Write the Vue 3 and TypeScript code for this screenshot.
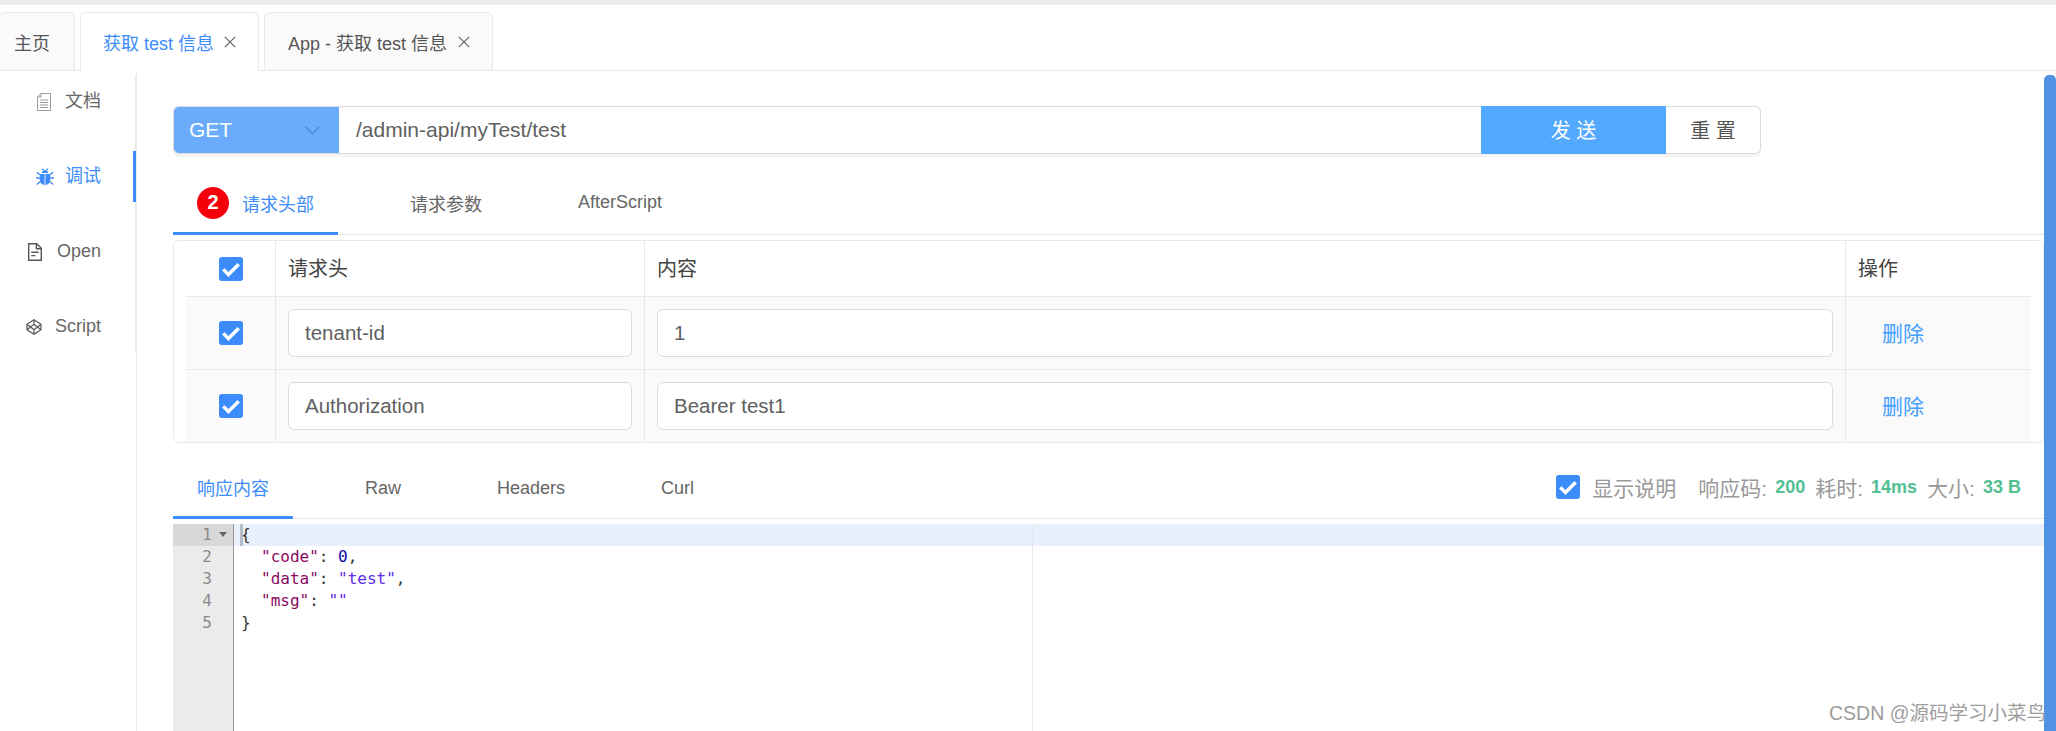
<script setup lang="ts">
const requestTabs = ['请求参数', 'AfterScript']
const responseTabs = ['Raw', 'Headers', 'Curl']
const rows = [
  { id: 1, name: 'tenant-id', value: '1' },
  { id: 2, name: 'Authorization', value: 'Bearer test1' },
]
</script>

<template>
  <div class="page">
    <div class="strip"></div>
    <div class="top-tabs">
      <div class="top-tab first">主页</div>
      <div class="top-tab active">
        <span>获取 test 信息</span>
        <svg class="close" viewBox="0 0 12 12"><path d="M.8.8l10.400 10.400M11.200.8L.8 11.200" /></svg>
      </div>
      <div class="top-tab third">
        <span>App - 获取 test 信息</span>
        <svg class="close" viewBox="0 0 12 12"><path d="M.8.8l10.400 10.400M11.200.8L.8 11.200" /></svg>
      </div>
    </div>

    <div class="body">
      <aside class="aside">
        <nav class="menu">
          <div class="item">
            <svg class="ic doc" viewBox="0 0 14 18" fill="none" stroke="#999" stroke-width="1">
              <path d="M4 .5h9.500v17H.5V4z" /><path d="M4 .5V4H.5M3 7h8M3 9.500h8M3 12h8M3 14.500h8" />
            </svg>
            <span class="cjk">文档</span>
          </div>
          <div class="item on">
            <svg class="ic bug" viewBox="0 0 18 18">
              <path d="M5.800 5C6 3.300 7.300 2.300 9 2.300s3 1 3.200 2.700z" fill="#3c8dfb" />
              <path d="M3.800 6h4.800v11C5.800 16.800 3.800 14.800 3.800 12zM9.400 6h4.800v6c0 2.800-2 4.800-4.800 5z" fill="#3c8dfb" />
              <path d="M6 .6l2 2M12 .6l-2 2M.8 4.400l3.400 2.400M17.200 4.400l-3.400 2.400M0 10h4M18 10h-4M.8 16.600l3.600-3.200M17.200 16.600l-3.600-3.200" stroke="#3c8dfb" stroke-width="1.3" fill="none" />
            </svg>
            <span class="cjk">调试</span>
          </div>
          <div class="item wide">
            <svg class="ic open" viewBox="0 0 14 18" fill="none" stroke="#555" stroke-width="1.4">
              <path d="M.7.7h8l4.600 4.600v12H.7z" /><path d="M8.400.7v5h4.900M3.200 9.200h7.400M3.200 12.600h4.200" />
            </svg>
            <span>Open</span>
          </div>
          <div class="item script">
            <svg class="ic pen" viewBox="0 0 16 16" fill="none" stroke="#555" stroke-width="1.2">
              <path d="M8 .8l7 4.500v5.400l-7 4.500-7-4.500V5.300z" />
              <path d="M8 .8v4.400M8 10.800v4.400M1 5.300L8 10.800l7-5.500M1 10.700L8 5.200l7 5.500" />
            </svg>
            <span>Script</span>
          </div>
        </nav>
      </aside>

      <main class="main">
        <div class="url-bar">
          <div class="method">
            <span>GET</span>
            <svg class="chev" viewBox="0 0 14 8" fill="none" stroke="#4a86c9" stroke-width="1.2"><path d="M.6.8L7 7l6.400-6.200" /></svg>
          </div>
          <div class="url">/admin-api/myTest/test</div>
          <div class="send">发 送</div>
          <div class="reset">重 置</div>
        </div>

        <div class="tabs req">
          <div class="tab current"><span class="badge">2</span>请求头部</div>
          <div v-for="t in requestTabs" :key="t" class="tab">{{ t }}</div>
        </div>

        <div class="table">
          <div class="row head">
            <div class="cell check"><span class="box"><svg viewBox="0 0 14 14"><path d="M2.500 7.200l3 3 6-6" /></svg></span></div>
            <div class="cell"><span class="cjk">请求头</span></div>
            <div class="cell"><span class="cjk">内容</span></div>
            <div class="cell"><span class="cjk">操作</span></div>
          </div>
          <div v-for="r in rows" :key="r.id" class="row line">
            <div class="cell check"><span class="box"><svg viewBox="0 0 14 14"><path d="M2.500 7.200l3 3 6-6" /></svg></span></div>
            <div class="cell"><div class="field">{{ r.name }}</div></div>
            <div class="cell"><div class="field">{{ r.value }}</div></div>
            <div class="cell del">删除</div>
          </div>
        </div>

        <div class="tabs resp">
          <div class="tab current zh">响应内容</div>
          <div v-for="t in responseTabs" :key="t" class="tab">{{ t }}</div>
          <div class="status">
            <span class="box"><svg viewBox="0 0 14 14"><path d="M2.500 7.200l3 3 6-6" /></svg></span>
            <span class="show">显示说明</span>
            <span class="lab">响应码:</span><b>200</b>
            <span class="lab">耗时:</span><b>14ms</b>
            <span class="lab">大小:</span><b>33 B</b>
          </div>
        </div>

        <div class="editor">
          <div class="gutter">
            <div class="gl cur">1<i class="fold"></i></div>
            <div class="gl">2</div>
            <div class="gl">3</div>
            <div class="gl">4</div>
            <div class="gl">5</div>
          </div>
          <div class="lines">
            <div class="cl cur"><i class="caret"></i>{</div>
            <div class="cl in"><span class="k">"code"</span>: <span class="n">0</span>,</div>
            <div class="cl in"><span class="k">"data"</span>: <span class="s">"test"</span>,</div>
            <div class="cl in"><span class="k">"msg"</span>: <span class="s">""</span></div>
            <div class="cl">}</div>
            <div class="margin"></div>
          </div>
        </div>
      </main>
    </div>

    <div class="scrollbar"></div>
    <div class="mark">CSDN @源码学习小菜鸟</div>
  </div>
</template>

<style>
html, body { margin: 0; background: #fff; overflow: hidden; }
</style>

<style scoped>
.page {
  position: relative;
  width: 2056px;
  height: 731px;
  overflow: hidden;
  background: #fff;
  color: #555;
  font-family: "Liberation Sans", "Noto Sans CJK SC", sans-serif;
  font-size: 18px;
}
.strip { height: 5px; background: #e9ebef; }
.top-tabs {
  display: flex;
  gap: 5px;
  height: 66px;
  padding-top: 7px;
  box-sizing: border-box;
  border-bottom: 1px solid #e8e8e8;
}
.top-tab {
  display: flex;
  align-items: center;
  gap: 10px;
  height: 59px;
  box-sizing: border-box;
  padding: 0 22px;
  background: #fafafa;
  border: 1px solid #e8e8e8;
  border-radius: 6px 6px 0 0;
}
.top-tab.first { margin-left: -1px; width: 76px; padding: 0 0 0 15px; border-left: 0; }
.top-tab.active { background: #fff; border-bottom-color: #fff; color: #3c8dfb; }
.top-tab.third { gap: 11px; padding: 0 22px 0 23px; }
.close { width: 12px; height: 12px; fill: none; stroke: #666; stroke-width: 1.2; }

.body { display: flex; height: 660px; }
.aside {
  flex: none;
  width: 137px;
  box-sizing: border-box;
  padding-top: 4px;
  border-right: 1px solid #e8e8e8;
}
.menu {
  display: flex;
  flex-direction: column;
  gap: 24px;
  height: 277px;
  box-sizing: border-box;
  padding-top: 1px;
  border-right: 2px solid #e8e8e8;
  margin-right: -1px;
}
.item {
  position: relative;
  flex: none;
  display: flex;
  align-items: center;
  justify-content: flex-end;
  gap: 14px;
  height: 51px;
  padding-right: 34px;
  color: #666;
}
.item .cjk { margin-bottom: 5px; }
.item.on { color: #3c8dfb; }
.item.on::after {
  content: "";
  position: absolute;
  top: 0;
  right: -1px;
  width: 3px;
  height: 51px;
  background: #3c8dfb;
}
.item.wide { gap: 15px; }
.item.script { gap: 13px; }
.ic { flex: none; }
.doc { width: 14px; height: 18px; }
.bug { width: 18px; height: 18px; margin-right: -3px; }
.open { width: 14px; height: 18px; }
.pen { width: 16px; height: 16px; }

.main {
  flex: 1;
  min-width: 0;
  padding: 35px 12px 0 36px;
}
.url-bar {
  display: flex;
  width: 1588px;
  height: 48px;
  box-shadow: 0 3px 0 #f4f4f4;
  border-radius: 6px;
}
.method {
  flex: none;
  display: flex;
  align-items: center;
  justify-content: space-between;
  box-sizing: border-box;
  width: 166px;
  padding: 0 19px 0 15px;
  background: #6aacfb;
  border: 1px solid #dcdcdc;
  border-right: 0;
  border-radius: 6px 0 0 6px;
  color: #fff;
  font-size: 21px;
}
.chev { width: 15px; height: 9px; }
.url {
  flex: 1;
  display: flex;
  align-items: center;
  padding-left: 17px;
  border: 1px solid #dcdcdc;
  border-width: 1px 0;
  font-size: 21px;
  color: #606060;
}
.send {
  flex: none;
  display: flex;
  align-items: center;
  justify-content: center;
  width: 185px;
  padding-bottom: 2px;
  box-sizing: border-box;
  background: #53a8ff;
  color: #fff;
  font-size: 20px;
}
.reset {
  flex: none;
  display: flex;
  align-items: center;
  justify-content: center;
  width: 95px;
  padding-bottom: 2px;
  box-sizing: border-box;
  border: 1px solid #dcdcdc;
  border-left: 0;
  border-radius: 0 6px 6px 0;
  font-size: 20px;
  color: #555;
}

.tabs {
  display: flex;
  gap: 48px;
  border-bottom: 1px solid #e8e8e8;
  box-sizing: border-box;
}
.tabs.req { height: 57px; margin-top: 24px; }
.tabs.resp { height: 76px; }
.tab {
  display: flex;
  align-items: center;
  gap: 13px;
  margin-bottom: -1px;
  padding: 0 24px;
  border-bottom: 3px solid transparent;
  box-sizing: border-box;
  color: #666;
}
.tabs.req .tab { padding-bottom: 5px; }
.tabs.resp .tab { padding-top: 17px; }
.tabs.resp .tab.zh { padding-top: 14px; }
.tab.current { color: #3c8dfb; border-bottom-color: #3c8dfb; }
.badge {
  display: flex;
  align-items: center;
  justify-content: center;
  width: 32px;
  height: 32px;
  border-radius: 50%;
  background: #f5000a;
  color: #fff;
  font-size: 20px;
  font-weight: 700;
}

.table {
  margin-top: 5px;
  height: 203px;
  box-sizing: border-box;
  border: 1px solid #e8e8e8;
  border-radius: 6px;
  color: #444;
  font-size: 20px;
}
.row { display: grid; }
.head { grid-template-columns: 101px 369px 1201px 1fr; height: 55px; }
.head .cjk { margin-bottom: 3px; }
.line {
  grid-template-columns: 89px 369px 1201px 1fr;
  height: 73px;
  margin: 0 12px;
  background: #fafafa;
  border-top: 1px solid #e8e8e8;
  box-sizing: border-box;
  color: #666;
}
.cell {
  display: flex;
  align-items: center;
  padding: 0 12px;
  box-sizing: border-box;
  border-left: 1px solid #e8e8e8;
}
.cell.check { justify-content: center; border-left: 0; padding: 0; }
.head .cell.check { padding-left: 12px; }
.field {
  display: flex;
  align-items: center;
  box-sizing: border-box;
  width: 100%;
  height: 48px;
  padding-left: 16px;
  background: #fff;
  border: 1px solid #dcdcdc;
  border-radius: 6px;
  color: #606060;
  font-size: 20.500px;
}
.cell.del { padding-left: 36px; color: #409eff; font-size: 21px; padding-bottom: 3px; }
.box {
  flex: none;
  display: block;
  width: 24px;
  height: 24px;
  background: #3c8dfb;
  border-radius: 3px;
}
.box svg { display: block; width: 24px; height: 24px; fill: none; stroke: #fff; stroke-width: 2; }

.status {
  display: flex;
  align-items: center;
  margin-left: auto;
  padding: 13px 23px 0 0;
  font-size: 21px;
  color: #999;
}
.show { margin: 0 22px 0 12px; }
.status b { margin: 0 10px 0 8px; font-size: 18px; color: #52bf92; font-weight: 700; }
.status b:last-child { margin-right: 0; }

.editor {
  display: flex;
  margin-top: 5px;
  height: 207px;
  font-family: "DejaVu Sans Mono", "Liberation Mono", monospace;
  font-size: 16px;
  line-height: 22px;
}
.gutter {
  flex: none;
  width: 61px;
  box-sizing: border-box;
  background: #ebebeb;
  border-right: 1px solid #999;
  color: #8a8a8a;
}
.gl { position: relative; height: 22px; text-align: right; padding-right: 21px; }
.gl.cur { background: #d8d8d8; }
.fold {
  position: absolute;
  top: 8px;
  left: 46px;
  border: 4px solid transparent;
  border-top: 5px solid #666;
  border-bottom: 0;
}
.lines { position: relative; flex: 1; color: #333; }
.cl { position: relative; height: 22px; padding-left: 7px; white-space: pre; }
.cl.in { padding-left: 27px; }
.cl.cur { background: #e8f0fe; }
.caret { position: absolute; left: 6px; top: 0; width: 3px; height: 22px; background: #b5bdc9; }
.margin { position: absolute; left: 798px; top: 0; bottom: 0; width: 1px; background: #e8e8e8; }
.k { color: #8b0a5e; }
.n { color: #0a0aa8; }
.s { color: #5b2be8; }

.scrollbar {
  position: absolute;
  right: 0;
  top: 75px;
  bottom: 0;
  width: 12px;
  background: #4f92e3;
  border-radius: 5px 5px 0 0;
}
.mark {
  position: absolute;
  left: 1829px;
  top: 697px;
  font-size: 19.500px;
  color: #9d9d9d;
  white-space: nowrap;
}
</style>
